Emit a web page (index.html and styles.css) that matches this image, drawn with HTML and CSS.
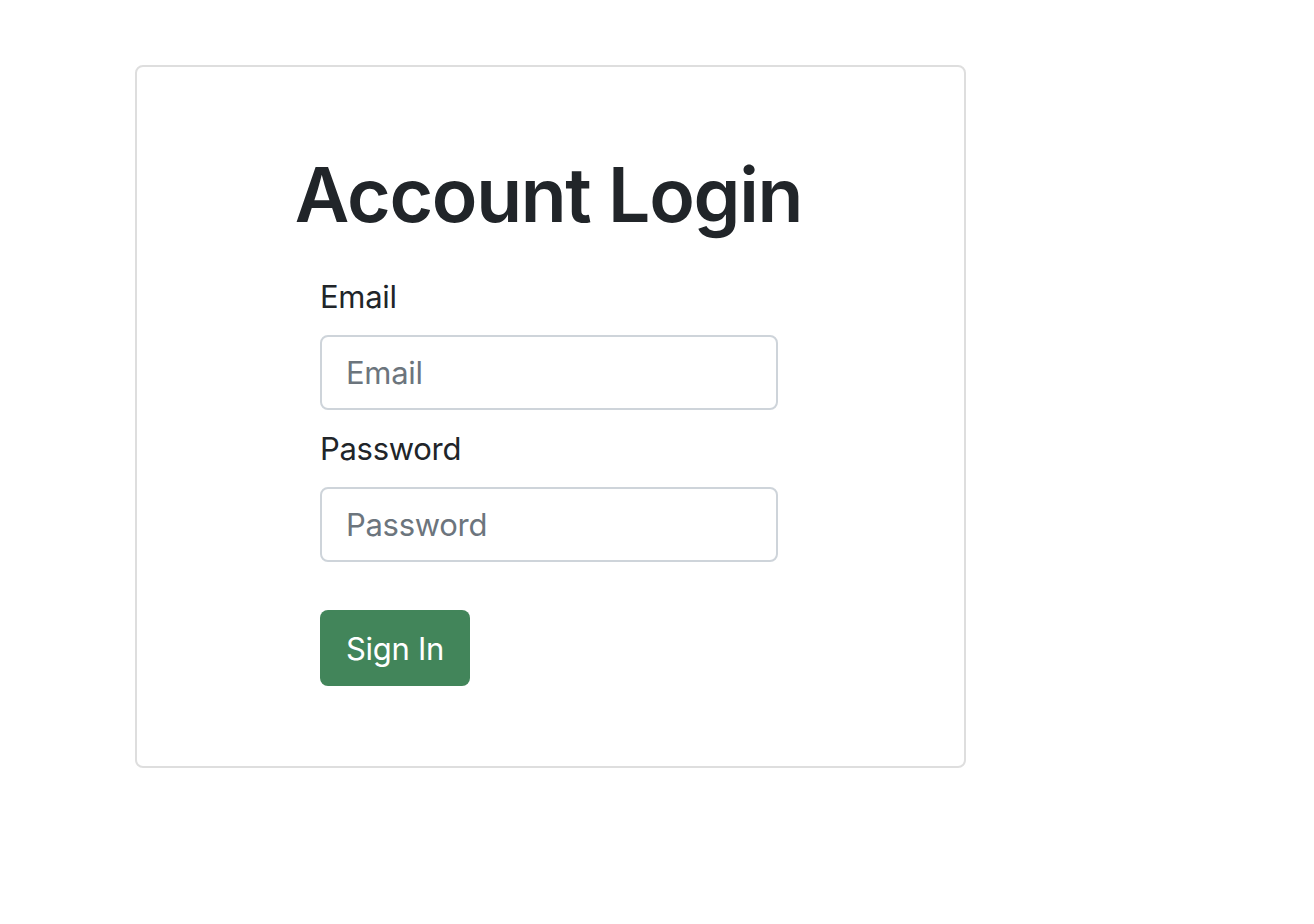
FILE: index.html
```html
<!DOCTYPE html>
<html lang="en">
<head>
  <meta charset="UTF-8" />
  <meta name="viewport" content="width=device-width, initial-scale=1.0"/>
  <title>Account Login</title>
  <link rel="stylesheet" href="styles.css">
</head>
<body>
  <div class="login-card">
    <h1>Account Login</h1>
    <form class="login-form" onsubmit="return false">
      <div class="form-group">
        <label for="email">Email</label>
        <input type="email" id="email" placeholder="Email" />
      </div>
      <div class="form-group">
        <label for="password">Password</label>
        <input type="password" id="password" placeholder="Password" />
      </div>
      <button type="submit">Sign In</button>
    </form>
  </div>
</body>
</html>
```

FILE: styles.css
```css
body {
  margin: 0;
  font-family: Inter, "Noto Sans", sans-serif;
  color: #212529;
  background: #fff;
}
.login-card {
  box-sizing: border-box;
  width: 831px;
  margin: 65px 0 0 135px;
  padding: 82px 0 80px;
  border: 2px solid #dedede;
  border-radius: 8px;
  display: flex;
  flex-direction: column;
  align-items: center;
}
h1 {
  margin: 0 4px 33px 0;
  font-size: 75px;
  font-weight: 600;
  line-height: 92px;
  letter-spacing: -1.3px;
  text-align: center;
}
.login-form {
  width: 458px;
  margin-right: 3px;
}
.form-group {
  margin-bottom: 16px;
}
.form-group label {
  display: block;
  font-size: 31px;
  line-height: 46px;
  letter-spacing: -0.3px;
  margin-bottom: 15px;
}
.form-group input {
  box-sizing: border-box;
  display: block;
  width: 100%;
  height: 75px;
  padding: 0 24px;
  font-family: inherit;
  font-size: 31px;
  letter-spacing: -0.3px;
  color: #212529;
  border: 2px solid #ced4da;
  border-radius: 8px;
  outline: none;
}
.form-group input::placeholder {
  color: #6c757d;
}
button {
  margin-top: 32px;
  height: 76px;
  width: 150px;
  padding: 0;
  font-family: inherit;
  font-size: 31px;
  letter-spacing: -0.3px;
  color: #fff;
  background: #42855a;
  border: none;
  border-radius: 8px;
  cursor: pointer;
}
```
